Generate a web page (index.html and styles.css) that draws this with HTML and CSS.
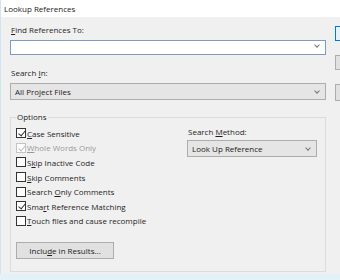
FILE: index.html
```html
<!DOCTYPE html>
<html lang="en">

<head>
    <meta charset="UTF-8">
    <meta name="viewport" content="width=device-width, initial-scale=1.0">
    <title>Lookup References</title>
    <link rel="stylesheet" href="styles.css">
</head>

<body>
    <div class="title">Lookup References</div>
    <div class="dialog">
        <div class="main">
            <label class="cap"><u>F</u>ind References To:</label>
            <div class="input">
                <span class="chev"></span>
            </div>
            <label class="cap search-in">Search <u>I</u>n:</label>
            <div class="combo">
                <span>All Project Files</span>
                <span class="chev"></span>
            </div>
            <fieldset class="group">
                <legend>Options</legend>
                <div class="cols">
                    <ul class="checks">
                        <li><span class="box on"></span><span><u>C</u>ase Sensitive</span></li>
                        <li class="off"><span class="box on"></span><span><u>W</u>hole Words Only</span></li>
                        <li><span class="box"></span><span>S<u>k</u>ip Inactive Code</span></li>
                        <li><span class="box"></span><span><u>S</u>kip Comments</span></li>
                        <li><span class="box"></span><span>Search <u>O</u>nly Comments</span></li>
                        <li><span class="box on"></span><span>Sma<u>r</u>t Reference Matching</span></li>
                        <li><span class="box"></span><span><u>T</u>ouch files and cause recompile</span></li>
                    </ul>
                    <div class="method">
                        <label class="cap">Search <u>M</u>ethod:</label>
                        <div class="combo small">
                            <span>Look Up Reference</span>
                            <span class="chev"></span>
                        </div>
                    </div>
                </div>
                <button class="btn">Inclu<u>d</u>e in Results...</button>
            </fieldset>
        </div>
        <div class="side">
            <div class="sbtn default"></div>
            <div class="sbtn"></div>
            <div class="sbtn third"></div>
        </div>
    </div>
    <div class="strip"></div>
</body>

</html>
```

FILE: styles.css
```css
* {
    margin: 0;
    padding: 0;
    box-sizing: border-box;
}

body {
    width: 340px;
    height: 280px;
    overflow: hidden;
    background: #f0f0f0;
    font-family: "Open Sans", "Noto Sans", sans-serif;
    font-size: 8px;
    color: #1e1e1e;
}

ul {
    list-style: none;
}

u {
    text-decoration-thickness: 1px;
    text-underline-offset: 1px;
}

.title {
    height: 17px;
    line-height: 17px;
    background: #fff;
    padding-left: 3px;
    color: #222;
    border-left: 1px solid #cfe6f2;
}

.dialog {
    display: flex;
    height: 257px;
    border-left: 1px solid #cfe6f2;
}

.main {
    width: 325px;
    flex: none;
    padding: 7px 0 0 9px;
    margin-right: 9px;
}

.cap {
    display: block;
    height: 12px;
    line-height: 12px;
    margin-left: 1px;
}

.input {
    height: 15px;
    margin-top: 4px;
    background: #fff;
    border: 1px solid #7a9cc6;
    position: relative;
}

.search-in {
    margin-top: 12px;
}

.combo {
    height: 17px;
    margin-top: 4px;
    background: #e5e5e5;
    border: 1px solid #adadad;
    display: flex;
    align-items: center;
    justify-content: space-between;
    padding: 0 6px 0 4px;
    color: #222;
}

.chev {
    width: 4px;
    height: 4px;
    border-right: 1px solid #777;
    border-bottom: 1px solid #777;
    transform: rotate(45deg);
    margin-top: -2px;
}

.input .chev {
    position: absolute;
    right: 6px;
    top: 4px;
}

.group {
    margin-top: 11px;
    height: 161px;
    border: 1px solid #dcdcdc;
    padding: 0 0 0 5px;
}

.group legend {
    padding: 0 1px;
    line-height: 12px;
}

.cols {
    display: flex;
    padding-top: 3px;
}

.checks {
    width: 171px;
}

.checks li {
    height: 14.6px;
    display: flex;
    align-items: center;
    gap: 1px;
}

.box {
    width: 10px;
    height: 10px;
    border: 1px solid #333;
    background: #fff;
    position: relative;
    flex: none;
}

.box.on::after {
    content: "";
    position: absolute;
    left: 2.5px;
    top: 0;
    width: 3px;
    height: 6px;
    border-right: 1px solid #333;
    border-bottom: 1px solid #333;
    transform: rotate(40deg);
}

.checks .off {
    color: #9a9a9a;
}

.checks .off .box {
    border-color: #c4c4c4;
}

.checks .off .box.on::after {
    border-color: #bcbcbc;
}

.method {
    width: 130px;
}

.combo.small {
    margin-top: 2px;
}

.btn {
    display: block;
    margin-top: 14px;
    width: 98px;
    height: 17px;
    background: #e1e1e1;
    border: 1px solid #adadad;
    font: inherit;
    color: #222;
}

.side {
    flex: 1;
    padding-top: 9px;
    overflow: hidden;
}

.sbtn {
    height: 15px;
    background: #e1e1e1;
    border: 1px solid #adadad;
    border-right: none;
    margin-bottom: 14px;
}

.sbtn.default {
    background: #e5f1fb;
    border: 1px solid #0078d7;
    border-right: none;
}

.sbtn.third {
    height: 17px;
}

.strip {
    height: 6px;
    background: #e3f2f8;
}
```
